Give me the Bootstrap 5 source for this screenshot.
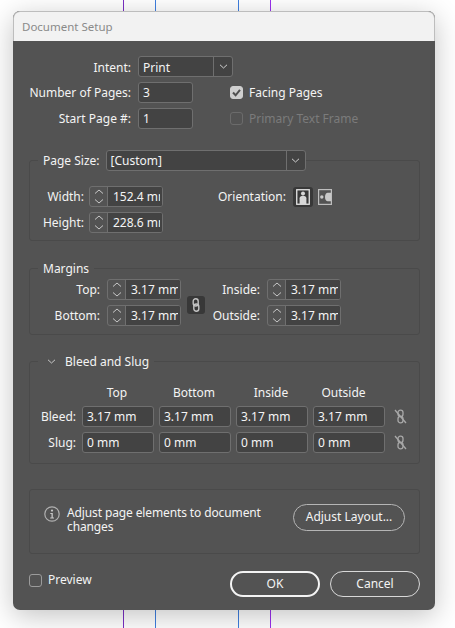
<!DOCTYPE html>
<html lang="en">
<head>
<meta charset="utf-8">
<title>Document Setup</title>
<link href="https://cdn.jsdelivr.net/npm/bootstrap@5.3.0/dist/css/bootstrap.min.css" rel="stylesheet">
<style>
html,body{height:628px;overflow:hidden}
body{margin:0;background-color:#fff;background-image:linear-gradient(#7a2fc4,#7a2fc4),linear-gradient(#3f7fe0,#3f7fe0),linear-gradient(#3f7fe0,#3f7fe0),linear-gradient(#9a30ee,#9a30ee);background-size:1px 100%;background-repeat:no-repeat;background-position:123px 0,155px 0,238px 0,270px 0;font-family:"Noto Sans","Liberation Sans",sans-serif;font-size:12px;line-height:16px;color:#f4f4f4;padding:11px 0 0 13px}
.dlg{width:422px;height:599px;border-radius:7px;overflow:hidden;background:#535353;box-shadow:0 6px 28px rgba(0,0,0,.24);display:flex;flex-direction:column}
.dlg-title{height:30px;flex:none;background:#f2f2f2;color:#8a8a8a;font-size:11.5px;padding:7px 0 0 8px;border:1px solid #bdbdbd;border-bottom:0;border-radius:7px 7px 0 0}
.dlg-body{padding:15px 15px 0 16px}
.rw{height:21px}
.rw+.rw{margin-top:5px}
.lbl{flex:none;text-align:right;white-space:nowrap}
.nudge{margin-top:2px}
.fld{height:21px;flex:none;background:#434343;border:1px solid #6f6f6f;border-radius:3px;padding:2px 0 0 4px;white-space:nowrap;overflow:hidden;color:#f4f4f4;font-size:12px;line-height:16px}
.caret-cell{flex:none;width:19px;height:100%;border-left:1px solid #6f6f6f;display:flex;align-items:center;justify-content:center}
.selbox{display:flex;padding:0 0 0 4px;align-items:center;justify-content:space-between}
.spin{width:74px;display:flex;padding:0;background:#535353}
.spin-btn{flex:none;width:18px;border-right:1px solid #6f6f6f;display:flex;align-items:center;justify-content:center}
.spin-val{flex:1;min-width:0;overflow:hidden;background:#434343;padding:2px 0 0 5px;border-right:2px solid #434343}
.w-num{width:55px}
.w-sel{width:95px}
.w-pg{width:200px}
.w-lab-top{width:102px}
.gap-top{gap:7px}
.chk-col{margin-left:-3px}
.chk{width:13px;height:13px;margin:0;flex:none;background-color:transparent;border:1px solid #9b9b9b;border-radius:2px;box-shadow:none!important}
.chk:checked{background-color:#cfcfcf;border-color:#cfcfcf;background-image:url("data:image/svg+xml,%3Csvg xmlns='http://www.w3.org/2000/svg' viewBox='0 0 13 13'%3E%3Cpath d='M3 6.5l2.6 2.8L10 3.8' fill='none' stroke='%23505050' stroke-width='2'/%3E%3C/svg%3E");background-size:13px 13px}
.chk:disabled{opacity:1;border-color:#6b6b6b}
.chk-t{margin-left:6px}
.chk-off{color:#7b7b7b}
.grp{border:1px solid #4a4a4a;border-radius:3px;margin:0;padding:0 0 9px;min-width:0}
.grp legend{float:none;width:auto;margin:0 0 0 8px;padding:0 5px;font-size:12px;line-height:21px;height:21px}
.grp-1{margin-top:21px;padding-bottom:7px}
.grp-1 .inner{padding-top:15px}
.grp-1 legend{gap:6px;padding-right:0}
.grp-2{margin-top:17px;padding-bottom:8px}
.grp-3{margin-top:16px;padding-bottom:10px}
.gap-spin{gap:5px}
.gap-mg{gap:7px}
.w-54{width:54px}
.w-70{width:70px}
.w-55{width:55px}
.orient{margin:1px 0 0 55px;height:20px;gap:0}
.or-a{flex:none;width:20px;height:20px;margin-left:7px;border-radius:3px;background:#383838;display:flex;align-items:center;justify-content:center}
.or-b{flex:none;display:flex;margin-left:5px}
.chain{flex:none;width:18px;height:18px;margin:4px 0 0 6px;border-radius:3px;background:#383838;display:flex;align-items:center;justify-content:center}
.mg-col{display:flex;flex-direction:column}
.leg-chev{margin-right:9px;margin-left:4px;vertical-align:2px}
.bleed{display:grid;grid-template-columns:47px repeat(4,72px) 12px;column-gap:5px;row-gap:5px;padding-top:11px;align-items:center}
.bleed .lbl{margin-right:1px}
.bleed .fld{width:72px}
.head{height:18px;line-height:20px;text-align:center;padding-right:2px}
.head-out{padding-right:11px}
.unlink{margin-left:4px}
.info{margin-top:25px;height:65px;border:1px solid #4a4a4a;border-radius:3px;padding:0 14px}
.info-icon{flex:none;margin-bottom:16px}
.info-txt{width:202px;line-height:14px;margin:-3px 0 0 7px;letter-spacing:-.12px}
.pill{font-family:inherit;font-size:12px;line-height:16px;color:#f4f4f4;background:transparent;border-radius:14px;padding:0}
.pill:hover{color:#f4f4f4}
.pill-adj{width:112px;height:27px;border:1.5px solid #b5b5b5;margin:0 0 9px auto}
.foot{margin-top:17px}
.foot-prev{margin-top:-8px}
.pill-ok{width:90px;height:26px;border:2px solid #f4f4f4}
.pill-cx{width:90px;height:26px;border:1px solid #d8d8d8;margin-left:10px}
</style>
</head>
<body>
<div class="dlg">
  <div class="dlg-title">Document Setup</div>
  <div class="dlg-body">

    <div class="d-flex">
      <div>
        <div class="rw d-flex align-items-center gap-top"><div class="lbl w-lab-top nudge">Intent:</div>
          <div class="fld selbox w-sel"><span class="nudge">Print</span><span class="caret-cell"><svg width="9" height="5" viewBox="0 0 9 5"><path d="M1 .8l3.5 3.2L8 .8" fill="none" stroke="#d0d0d0"/></svg></span></div></div>
        <div class="rw d-flex align-items-center gap-top"><div class="lbl w-lab-top">Number of Pages:</div><div class="fld w-num">3</div></div>
        <div class="rw d-flex align-items-center gap-top"><div class="lbl w-lab-top">Start Page #:</div><div class="fld w-num">1</div></div>
      </div>
      <div class="chk-col">
        <div class="rw"></div>
        <div class="rw d-flex align-items-center"><input class="form-check-input chk" type="checkbox" checked aria-label="Facing Pages"><span class="chk-t">Facing Pages</span></div>
        <div class="rw d-flex align-items-center"><input class="form-check-input chk" type="checkbox" disabled aria-label="Primary Text Frame"><span class="chk-t chk-off">Primary Text Frame</span></div>
      </div>
    </div>

    <fieldset class="grp grp-1">
      <legend class="d-flex align-items-center"><span class="lbl">Page Size:</span>
        <span class="fld selbox w-pg"><span>[Custom]</span><span class="caret-cell"><svg width="9" height="5" viewBox="0 0 9 5"><path d="M1 .8l3.5 3.2L8 .8" fill="none" stroke="#d0d0d0"/></svg></span></span></legend>
      <div class="inner d-flex">
        <div>
          <div class="rw d-flex align-items-center gap-spin"><div class="lbl w-54">Width:</div>
            <div class="fld spin"><span class="spin-btn"><svg width="10" height="17" viewBox="0 0 10 17"><path d="M1 5.5l4-3.5 4 3.5M1 11.5l4 3.5 4-3.5" fill="none" stroke="#c8c8c8"/></svg></span><span class="spin-val">152.4 mm</span></div></div>
          <div class="rw d-flex align-items-center gap-spin"><div class="lbl w-54">Height:</div>
            <div class="fld spin"><span class="spin-btn"><svg width="10" height="17" viewBox="0 0 10 17"><path d="M1 5.5l4-3.5 4 3.5M1 11.5l4 3.5 4-3.5" fill="none" stroke="#c8c8c8"/></svg></span><span class="spin-val">228.6 mm</span></div></div>
        </div>
        <div class="orient d-flex align-items-center">
          <span class="lbl">Orientation:</span>
          <span class="or-a"><svg width="14" height="16" viewBox="0 0 14 16"><rect x=".75" y=".75" width="12.5" height="14.5" fill="none" stroke="#e6e6e6" stroke-width="1.3"/><circle cx="7" cy="4.6" r="2" fill="#d8d8d8"/><path d="M3.6 15V9.2c0-1.5 1.2-2.4 3.4-2.4s3.4.9 3.4 2.4V15z" fill="#d8d8d8"/></svg></span>
          <span class="or-b"><svg width="14" height="16" viewBox="0 0 14 16"><rect x=".6" y=".6" width="12.8" height="14.8" fill="none" stroke="#bdbdbd" stroke-width="1.2"/><circle cx="3.8" cy="8" r="1.7" fill="#c8c8c8"/><path d="M13 3.8H9.8C8 3.8 7 5.5 7 8s1 4.2 2.8 4.2H13z" fill="#c8c8c8"/></svg></span>
        </div>
      </div>
    </fieldset>

    <fieldset class="grp grp-2">
      <legend>Margins</legend>
      <div class="d-flex align-items-center">
        <div class="mg-col">
          <div class="rw d-flex align-items-center gap-mg"><div class="lbl w-70">Top:</div>
            <div class="fld spin"><span class="spin-btn"><svg width="10" height="17" viewBox="0 0 10 17"><path d="M1 5.5l4-3.5 4 3.5M1 11.5l4 3.5 4-3.5" fill="none" stroke="#c8c8c8"/></svg></span><span class="spin-val">3.17 mm</span></div></div>
          <div class="rw d-flex align-items-center gap-mg"><div class="lbl w-70">Bottom:</div>
            <div class="fld spin"><span class="spin-btn"><svg width="10" height="17" viewBox="0 0 10 17"><path d="M1 5.5l4-3.5 4 3.5M1 11.5l4 3.5 4-3.5" fill="none" stroke="#c8c8c8"/></svg></span><span class="spin-val">3.17 mm</span></div></div>
        </div>
        <span class="chain"><svg width="8" height="14" viewBox="0 0 8 14"><g fill="none" stroke="#c4c4c4" stroke-width="1.4"><rect x="1.2" y=".8" width="5" height="7.2" rx="2.5"/><rect x="1.8" y="6" width="5" height="7.2" rx="2.5"/></g></svg></span>
        <div class="mg-col">
          <div class="rw d-flex align-items-center gap-mg"><div class="lbl w-55">Inside:</div>
            <div class="fld spin"><span class="spin-btn"><svg width="10" height="17" viewBox="0 0 10 17"><path d="M1 5.5l4-3.5 4 3.5M1 11.5l4 3.5 4-3.5" fill="none" stroke="#c8c8c8"/></svg></span><span class="spin-val">3.17 mm</span></div></div>
          <div class="rw d-flex align-items-center gap-mg"><div class="lbl w-55">Outside:</div>
            <div class="fld spin"><span class="spin-btn"><svg width="10" height="17" viewBox="0 0 10 17"><path d="M1 5.5l4-3.5 4 3.5M1 11.5l4 3.5 4-3.5" fill="none" stroke="#c8c8c8"/></svg></span><span class="spin-val">3.17 mm</span></div></div>
        </div>
      </div>
    </fieldset>

    <fieldset class="grp grp-3">
      <legend><svg class="leg-chev" width="9" height="5" viewBox="0 0 9 5"><path d="M1 .8l3.5 3.2L8 .8" fill="none" stroke="#c8c8c8"/></svg>Bleed and Slug</legend>
      <div class="bleed">
        <span></span><div class="head">Top</div><div class="head">Bottom</div><div class="head">Inside</div><div class="head head-out">Outside</div><span></span>
        <div class="lbl">Bleed:</div><div class="fld">3.17 mm</div><div class="fld">3.17 mm</div><div class="fld">3.17 mm</div><div class="fld">3.17 mm</div>
        <svg class="unlink" width="13" height="15" viewBox="0 0 13 15"><g fill="none" stroke="#a8a8a8" stroke-width="1.3"><rect x="4" y="1.2" width="5" height="6.4" rx="2.4"/><rect x="4" y="7.4" width="5" height="6.4" rx="2.4"/><path d="M1 1l11 13"/></g></svg>
        <div class="lbl">Slug:</div><div class="fld">0 mm</div><div class="fld">0 mm</div><div class="fld">0 mm</div><div class="fld">0 mm</div>
        <svg class="unlink" width="13" height="15" viewBox="0 0 13 15"><g fill="none" stroke="#a8a8a8" stroke-width="1.3"><rect x="4" y="1.2" width="5" height="6.4" rx="2.4"/><rect x="4" y="7.4" width="5" height="6.4" rx="2.4"/><path d="M1 1l11 13"/></g></svg>
      </div>
    </fieldset>

    <div class="info d-flex align-items-center">
      <svg class="info-icon" width="16" height="16" viewBox="0 0 16 16"><circle cx="8" cy="8" r="7.2" fill="none" stroke="#b0b0b0" stroke-width="1.2"/><circle cx="8" cy="4.6" r="1.1" fill="#c8c8c8"/><path d="M6.3 7h2.5v4.6h1.2v1H6.2v-1h1.3V8H6.3z" fill="#c8c8c8"/></svg>
      <div class="info-txt">Adjust page elements to document changes</div>
      <button type="button" class="btn pill pill-adj">Adjust Layout...</button>
    </div>

    <div class="foot d-flex align-items-center">
      <div class="foot-prev d-flex align-items-center"><input class="form-check-input chk" type="checkbox" aria-label="Preview"><span class="chk-t">Preview</span></div>
      <button type="button" class="btn pill pill-ok ms-auto">OK</button>
      <button type="button" class="btn pill pill-cx">Cancel</button>
    </div>
  </div>
</div>
</body>
</html>
